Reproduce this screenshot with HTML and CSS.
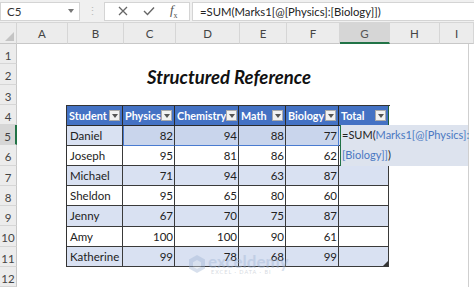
FILE: index.html
```html
<!DOCTYPE html>
<html lang="en">
<head>
    <meta charset="UTF-8">
    <title>Structured Reference</title>
    <link rel="stylesheet" href="styles.css">
</head>
<body>
    <div class="formula-bar">
        <div class="name-box">
            <span>C5</span>
            <span class="nb-arrow"></span>
        </div>
        <div class="grip">⋮</div>
        <div class="fx-buttons">
            <svg width="10" height="10" viewBox="0 0 10 10"><path d="M1 1 L9 9 M9 1 L1 9" stroke="#666" stroke-width="1.3" fill="none"/></svg>
            <svg width="12" height="10" viewBox="0 0 12 10"><path d="M1 5 L4.5 8.5 L11 1.5" stroke="#666" stroke-width="1.4" fill="none"/></svg>
            <span class="fx"><i>f</i><sub>x</sub></span>
        </div>
        <div class="formula-input">=SUM(Marks1[@[Physics]:[Biology]])</div>
    </div>

    <div class="sheet">
        <div class="corner"><span class="corner-tri"></span></div>
        <div class="col-head">A</div>
        <div class="col-head">B</div>
        <div class="col-head">C</div>
        <div class="col-head">D</div>
        <div class="col-head">E</div>
        <div class="col-head">F</div>
        <div class="col-head active">G</div>
        <div class="col-head">H</div>
        <div class="col-head">I</div>

        <div class="row-head">1</div>
        <div class="row-head">2</div>
        <div class="row-head">3</div>
        <div class="row-head">4</div>
        <div class="row-head active">5</div>
        <div class="row-head">6</div>
        <div class="row-head">7</div>
        <div class="row-head">8</div>
        <div class="row-head">9</div>
        <div class="row-head">10</div>
        <div class="row-head">11</div>
        <div class="row-head">12</div>

        <div class="edge"></div>

        <div class="title">Structured Reference</div>

        <div class="table">
            <div class="th">Student <span class="dd"></span></div>
            <div class="th">Physics <span class="dd"></span></div>
            <div class="th">Chemistry <span class="dd"></span></div>
            <div class="th">Math <span class="dd"></span></div>
            <div class="th">Biology <span class="dd"></span></div>
            <div class="th th-total">Total <span class="dd"></span></div>

            <div class="td band">Daniel</div>
            <div class="td num sel sel-first">82</div>
            <div class="td num sel">94</div>
            <div class="td num sel">88</div>
            <div class="td num sel sel-last">77</div>
            <div class="td band"></div>

            <div class="td">Joseph</div>
            <div class="td num">95</div>
            <div class="td num">81</div>
            <div class="td num">86</div>
            <div class="td num">62</div>
            <div class="td"></div>

            <div class="td band">Michael</div>
            <div class="td num band">71</div>
            <div class="td num band">94</div>
            <div class="td num band">63</div>
            <div class="td num band">87</div>
            <div class="td band"></div>

            <div class="td">Sheldon</div>
            <div class="td num">95</div>
            <div class="td num">65</div>
            <div class="td num">80</div>
            <div class="td num">60</div>
            <div class="td"></div>

            <div class="td band">Jenny</div>
            <div class="td num band">67</div>
            <div class="td num band">70</div>
            <div class="td num band">75</div>
            <div class="td num band">87</div>
            <div class="td band"></div>

            <div class="td">Amy</div>
            <div class="td num">100</div>
            <div class="td num">100</div>
            <div class="td num">90</div>
            <div class="td num">61</div>
            <div class="td"></div>

            <div class="td band">Katherine</div>
            <div class="td num band">99</div>
            <div class="td num band">78</div>
            <div class="td num band">68</div>
            <div class="td num band">99</div>
            <div class="td band last"></div>
        </div>

        <div class="edit-cell">=SUM(<span class="ref">Marks1[@[Physics]:</span><br><span class="ref">[Biology]]</span>)</div>
    </div>

    <div class="watermark">
        <svg width="18" height="20" viewBox="0 0 18 20"><path d="M9 1 L17 5.5 L17 14.5 L9 19 L1 14.5 L1 5.5 Z" fill="#9fb4d3"/><path d="M9 6 L13 8.3 L13 12.7 L9 15 L5 12.7 L5 8.3 Z" fill="#fff" opacity="0.6"/></svg>
        <div class="wm-text">
            <span class="wm-name">exceldemy</span>
            <span class="wm-sub">EXCEL · DATA · BI</span>
        </div>
    </div>
</body>
</html>
```

FILE: styles.css
```css
* {
    margin: 0;
    padding: 0;
    box-sizing: border-box;
}

body {
    width: 474px;
    height: 290px;
    overflow: hidden;
    background: #fff;
    font-family: Lato, "Liberation Sans", sans-serif;
    color: #222;
    position: relative;
}

/* formula bar */
.formula-bar {
    height: 23px;
    display: flex;
    align-items: center;
    background: #f0f0f0;
    padding: 2px 0;
    border-bottom: 1px solid #d6d6d6;
}

.name-box {
    width: 80px;
    height: 19px;
    background: #fff;
    border: 1px solid #d4d4d4;
    display: flex;
    align-items: center;
    justify-content: space-between;
    padding: 0 5px 0 6px;
    font-size: 11.5px;
    color: #333;
}

.nb-arrow {
    border-left: 3px solid transparent;
    border-right: 3px solid transparent;
    border-top: 4px solid #777;
}

.grip {
    width: 24px;
    text-align: center;
    color: #bbb;
    font-size: 11px;
}

.fx-buttons {
    width: 86px;
    height: 19px;
    background: #fff;
    border: 1px solid #d4d4d4;
    display: flex;
    align-items: center;
    justify-content: space-around;
    padding: 0 4px 0 6px;
}

.fx {
    font-family: "Liberation Serif", serif;
    font-size: 13px;
    color: #555;
}

.fx sub {
    font-size: 8px;
}

.formula-input {
    flex: 1;
    height: 19px;
    margin-left: 2px;
    background: #fff;
    border: 1px solid #d4d4d4;
    border-right: none;
    padding-left: 7px;
    font-size: 11.3px;
    line-height: 17px;
    color: #222;
}

/* sheet grid */
.sheet {
    display: grid;
    grid-template-columns: 17px 51px 56px 52px 64px 47px 53px 50px 50px 34px;
    grid-template-rows: 21px repeat(12, 20.25px);
}

.corner {
    background: #ececec;
    border-bottom: 1px solid #c8c8c8;
    border-right: 1px solid #d4d4d4;
    position: relative;
}

.corner-tri {
    position: absolute;
    right: 2px;
    bottom: 2px;
    border-left: 9px solid transparent;
    border-bottom: 9px solid #c4c4c4;
}

.col-head {
    background: #ececec;
    border-bottom: 1px solid #c8c8c8;
    border-right: 1px solid #d6d6d6;
    text-align: center;
    font-size: 11.5px;
    line-height: 21px;
    color: #444;
}

.col-head.active {
    background: #d6d6d6;
    border-bottom: 2px solid #217346;
    color: #555;
}

.row-head {
    grid-column: 1;
    background: #ececec;
    border-bottom: 1px solid #d6d6d6;
    border-right: 1px solid #c8c8c8;
    text-align: center;
    font-size: 11.5px;
    line-height: 20px;
    padding-top: 2px;
    color: #444;
}

.row-head.active {
    background: #d6d6d6;
    border-right: 2px solid #217346;
}

.edge {
    grid-column: 10;
    grid-row: 2 / -1;
    margin-right: 5px;
    border-right: 1px solid #cfcfcf;
}

.title {
    grid-column: 3 / 9;
    grid-row: 3;
    text-align: center;
    font-weight: bold;
    font-style: italic;
    font-size: 18.5px;
    line-height: 20px;
    padding-top: 3px;
    color: #111;
}

/* table */
.table {
    grid-column: 3 / 9;
    grid-row: 5 / 13;
    display: grid;
    grid-template-columns: 56px 52px 64px 47px 53px 50px;
    grid-template-rows: repeat(8, 1fr);
    border-left: 1px solid #333;
    border-top: 1px solid #333;
    margin-left: -2px;
}

.th {
    background: #4472c4;
    color: #fff;
    font-weight: bold;
    font-size: 10.8px;
    display: flex;
    align-items: center;
    justify-content: space-between;
    padding: 1px 2px 0 2px;
    border-right: 1px solid #2a2a2a;
    border-bottom: 1px solid #2a2a2a;
    white-space: nowrap;
}

.th-total {
    border-right-color: #1d5e3c;
}

.dd {
    flex: none;
    width: 11px;
    height: 11px;
    background: #f2f2f2;
    border: 1px solid #aaa;
    display: flex;
    align-items: center;
    justify-content: center;
}

.dd::after {
    content: "";
    border-left: 3px solid transparent;
    border-right: 3px solid transparent;
    border-top: 4px solid #555;
}

.td {
    font-size: 11.5px;
    line-height: 19px;
    padding: 0 3px;
    border-right: 1px solid #3a3a3a;
    border-bottom: 1px solid #3a3a3a;
    color: #222;
}

.td.num {
    text-align: right;
    padding-right: 1px;
}

.td.band {
    background: #d9e1f2;
}

.td.sel {
    background: #c9d5ec;
    border-bottom-color: #4a7bd0;
}

.td.sel-first {
    box-shadow: inset 1px 0 #4a7bd0;
}

.td.sel-last {
    border-right-color: #4a7bd0;
}

.td.last {
    position: relative;
}

.td.last::after {
    content: "";
    position: absolute;
    right: 0;
    bottom: 0;
    border-left: 5px solid transparent;
    border-bottom: 5px solid #333;
}

.edit-cell {
    grid-column: 8 / 11;
    grid-row: 6 / 8;
    margin-right: 6px;
    background: #dde3ee;
    border-left: 1px solid #217346;
    font-size: 11px;
    line-height: 20px;
    padding: 0 1px;
    color: #222;
    z-index: 1;
    white-space: nowrap;
}

.edit-cell .ref {
    color: #4a78c2;
}

/* watermark */
.watermark {
    position: absolute;
    left: 188px;
    top: 253px;
    display: flex;
    align-items: center;
    gap: 2px;
    opacity: 0.4;
}

.wm-text {
    display: flex;
    flex-direction: column;
    line-height: 1;
}

.wm-name {
    font-size: 17px;
    font-weight: bold;
    color: #9fb4d3;
}

.wm-sub {
    font-size: 5.5px;
    color: #9aa5b4;
    letter-spacing: 1px;
    padding-left: 3px;
}
```
